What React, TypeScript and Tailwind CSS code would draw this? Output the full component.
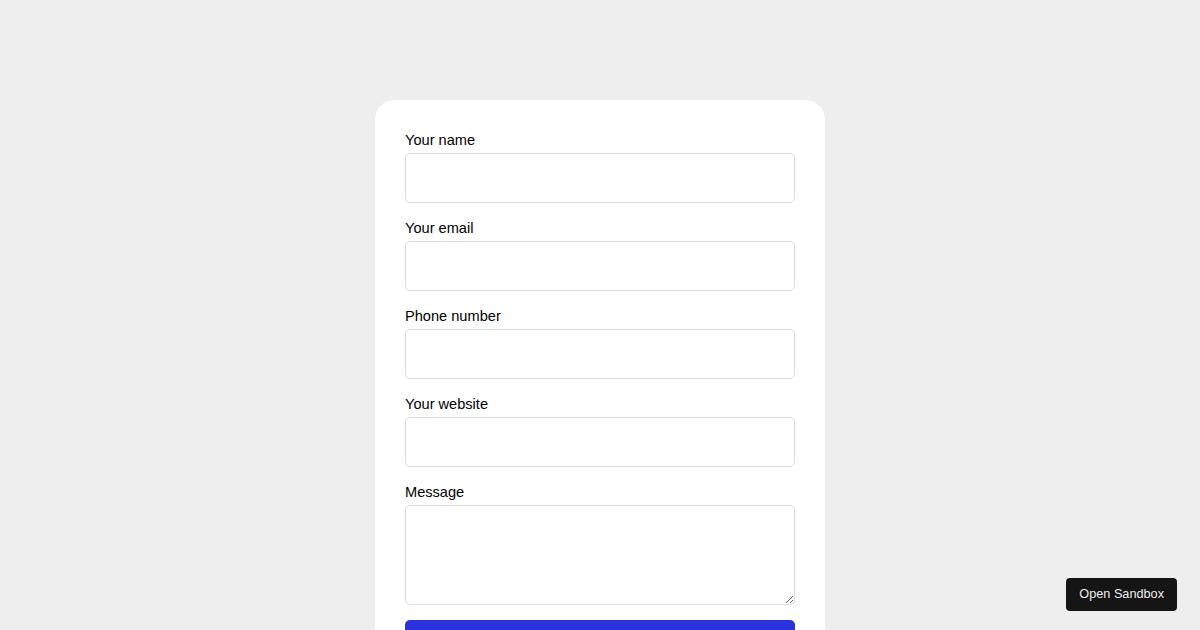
import React from 'react';

const fields = [
  { id: 'name', label: 'Your name', type: 'text' },
  { id: 'email', label: 'Your email', type: 'email' },
  { id: 'phone', label: 'Phone number', type: 'tel' },
  { id: 'website', label: 'Your website', type: 'url' },
];

export default function App() {
  return (
    <div
      className="min-h-screen bg-[#eeeeee] pt-[100px] pb-10 text-black"
      style={{ fontFamily: '"Liberation Sans", Arial, sans-serif' }}
    >
      <form className="mx-auto w-[450px] rounded-[20px] bg-white p-[30px]">
        {fields.map((f) => (
          <div key={f.id} className="mb-[15px]">
            <label htmlFor={f.id} className="mb-[3px] block text-[14.6px] leading-[20px]">
              {f.label}
            </label>
            <input
              id={f.id}
              type={f.type}
              className="block h-[50px] w-full rounded-[5px] border border-[#dddddd] px-3 text-[15px] outline-none"
            />
          </div>
        ))}
        <div className="mb-[15px]">
          <label htmlFor="message" className="mb-[3px] block text-[14.6px] leading-[20px]">
            Message
          </label>
          <textarea
            id="message"
            className="block h-[100px] w-full rounded-[5px] border border-[#dddddd] px-3 py-2 text-[15px] outline-none"
          />
        </div>
        <button
          type="submit"
          className="block h-[50px] w-full rounded-[5px] bg-[#2b31dd] pt-[30px] text-[15px] font-bold text-white"
        >
          Send message
        </button>
      </form>

      <button className="fixed bottom-[19px] right-[23px] h-[33px] rounded-[4px] bg-[#151515] px-[13px] text-[12.7px] text-[#eeeeee]">
        Open Sandbox
      </button>
    </div>
  );
}
